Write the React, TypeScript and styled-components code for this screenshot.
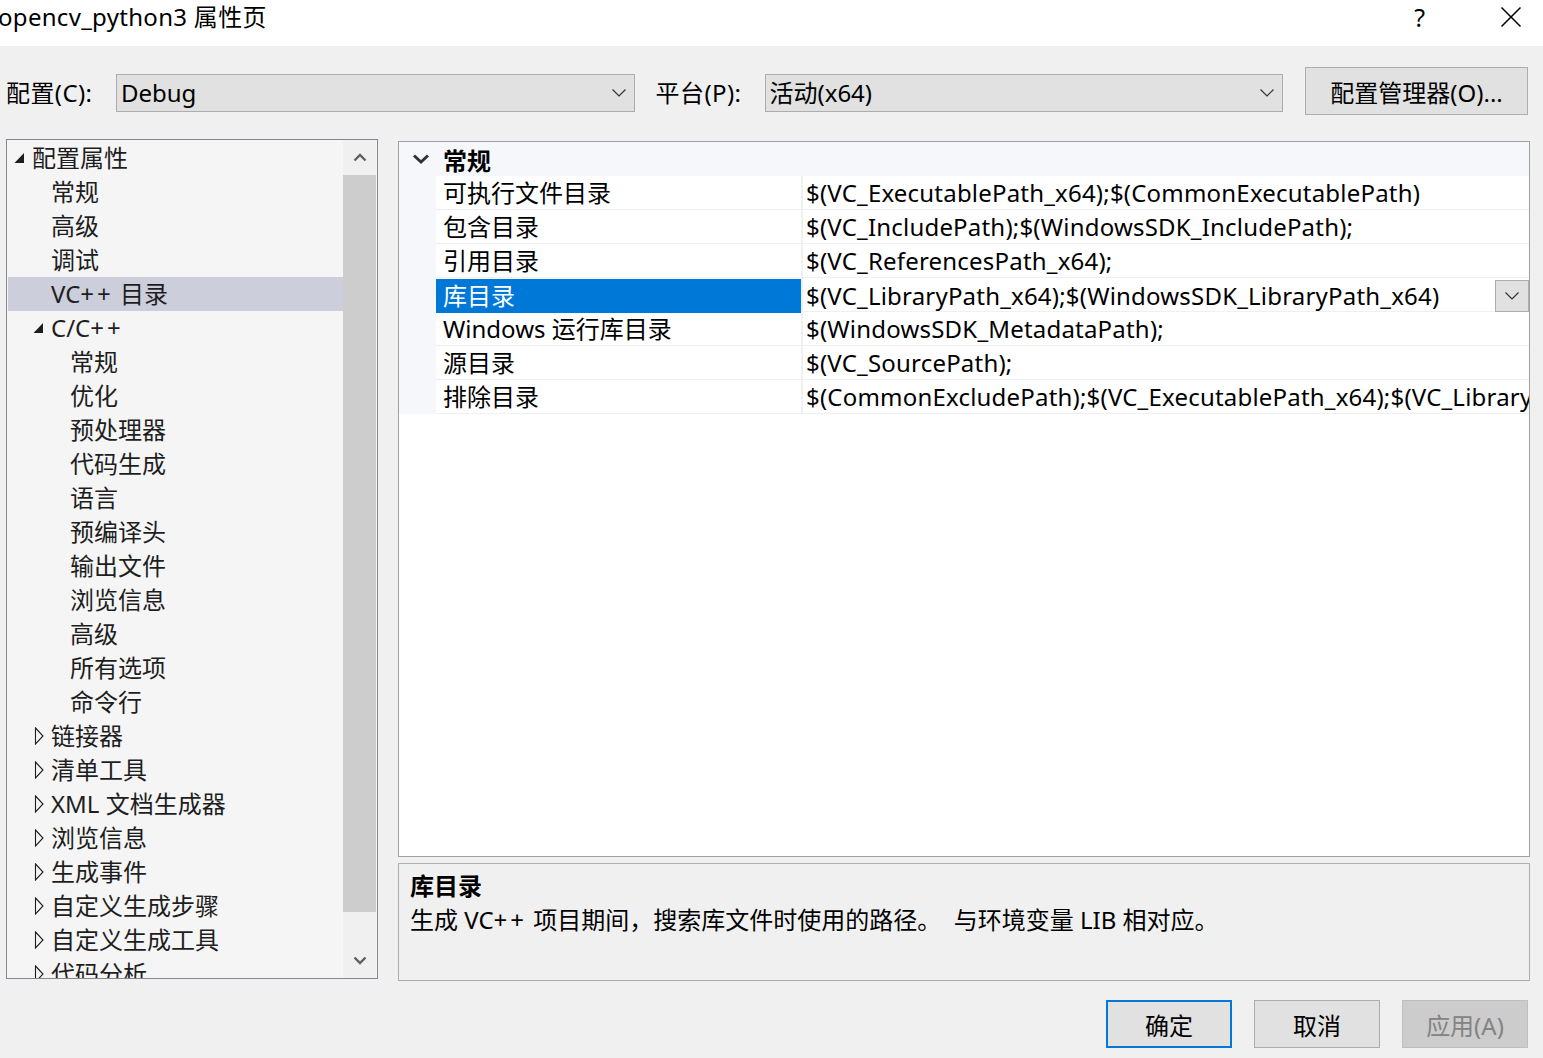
import React from "react";
import styled, { createGlobalStyle } from "styled-components";

const FONT = `"Noto Sans", "Noto Sans CJK SC", sans-serif`;

const Global = createGlobalStyle`
  html, body { margin: 0; padding: 0; }
  body { background: #f0f0f0; font-family: ${FONT}; color: #000; overflow: hidden; }
  * { box-sizing: border-box; }
`;

const Window = styled.div`
  width: 1543px;
  height: 1058px;
  background: #f0f0f0;
  display: flex;
  flex-direction: column;
  font-size: 24px;
`;

const TitleBar = styled.div`
  height: 46px;
  background: #ffffff;
  display: flex;
  align-items: flex-start;
  justify-content: space-between;
`;

const Title = styled.div`
  margin-left: -2px;
  line-height: 34px;
  font-size: 24px;
  letter-spacing: 0.3px;
  white-space: nowrap;
`;

const TitleButtons = styled.div`
  display: flex;
  align-items: center;
  height: 34px;
  margin-right: 21px;
  gap: 75px;
`;

const HelpGlyph = styled.span`
  font-size: 25px;
  line-height: 34px;
`;

const ConfigBar = styled.div`
  margin-top: 21px;
  height: 48px;
  display: flex;
  align-items: flex-start;
  padding: 0 15px 0 6px;
`;

const FieldLabel = styled.div<{ $w: number }>`
  width: ${(p) => p.$w}px;
  height: 38px;
  margin-top: 7px;
  line-height: 38px;
  letter-spacing: 0.4px;
  white-space: nowrap;
`;

const Combo = styled.div<{ $gap?: number }>`
  width: 519px;
  height: 38px;
  margin-top: 7px;
  margin-right: ${(p) => p.$gap ?? 0}px;
  background: #e1e1e1;
  border: 1px solid #adadad;
  display: flex;
  align-items: center;
  justify-content: space-between;
  padding: 0 7px 0 4px;
  line-height: 36px;
`;

const Button = styled.button<{ $w: number; $primary?: boolean; $disabled?: boolean }>`
  width: ${(p) => p.$w}px;
  height: 48px;
  font-family: ${FONT};
  font-size: 24px;
  color: ${(p) => (p.$disabled ? "#838383" : "#000")};
  background: ${(p) => (p.$disabled ? "#cccccc" : "#e1e1e1")};
  border: ${(p) => (p.$primary ? "2px solid #0078d7" : p.$disabled ? "1px solid #bfbfbf" : "1px solid #adadad")};
  padding: 0;
  margin: 0;
  white-space: nowrap;
`;

const Main = styled.div`
  margin-top: 24px;
  display: flex;
  padding-left: 6px;
  gap: 20px;
`;

const TreePanel = styled.div`
  width: 372px;
  height: 840px;
  border: 1px solid #828790;
  background: #f5f5f5;
  display: flex;
  overflow: hidden;
`;

const TreeList = styled.div`
  flex: 1;
  padding-top: 1px;
  overflow: hidden;
`;

const TreeRow = styled.div<{ $depth: number; $selected?: boolean }>`
  height: 34px;
  display: flex;
  align-items: center;
  padding-left: ${(p) => p.$depth * 19 + 6}px;
  background: ${(p) => (p.$selected ? "#cccedb" : "transparent")};
  margin-left: 1px;
  line-height: 32px;
  white-space: pre;
  color: #1e1e1e;
`;

const Plus = styled.span`
  letter-spacing: 3px;
`;

const Expander = styled.span`
  width: 18px;
  height: 34px;
  display: flex;
  align-items: center;
  flex-shrink: 0;
`;

const ScrollBar = styled.div`
  width: 33px;
  background: #f0f0f0;
  display: flex;
  flex-direction: column;
  margin-right: 1px;
`;

const ScrollArrow = styled.div`
  height: 35px;
  display: flex;
  align-items: center;
  justify-content: center;
`;

const ScrollThumb = styled.div`
  height: 737px;
  background: #cdcdcd;
`;

const ScrollTrack = styled.div`
  flex: 1;
`;

const RightColumn = styled.div`
  width: 1132px;
  padding-top: 2px;
  display: flex;
  flex-direction: column;
  gap: 6px;
`;

const PropGrid = styled.div`
  height: 716px;
  border: 1px solid #a0a0a0;
  background: #ffffff;
  overflow: hidden;
`;

const GroupHeader = styled.div`
  height: 34px;
  display: flex;
  align-items: center;
  background: #f5f7fa;
`;

const GroupToggle = styled.span`
  width: 37px;
  display: flex;
  justify-content: center;
  padding-left: 6px;
`;

const GroupTitle = styled.span`
  font-weight: 700;
  padding-left: 7px;
`;

const GroupBody = styled.div`
  display: flex;
`;

const Gutter = styled.div`
  width: 37px;
  background: #f5f7fa;
`;

const Rows = styled.div`
  flex: 1;
  min-width: 0;
`;

const PropRow = styled.div`
  height: 34px;
  display: grid;
  grid-template-columns: 365px 1fr;
  border-bottom: 1px solid #f0f0f0;
`;

const NameCell = styled.div<{ $selected?: boolean }>`
  background: ${(p) => (p.$selected ? "#0078d7" : "transparent")};
  color: ${(p) => (p.$selected ? "#ffffff" : "#000")};
  padding-left: 7px;
  line-height: 34px;
  white-space: nowrap;
  margin-top: ${(p) => (p.$selected ? "1px" : "0")};
`;

const ValueCell = styled.div`
  border-left: 2px solid #f0f0f0;
  padding-left: 3px;
  display: flex;
  align-items: center;
  min-width: 0;
  overflow: hidden;
`;

const ValueText = styled.span`
  flex: 1;
  white-space: nowrap;
  overflow: hidden;
  line-height: 34px;
  letter-spacing: 0.2px;
`;

const DropButton = styled.span`
  width: 34px;
  height: 32px;
  flex-shrink: 0;
  background: #e1e1e1;
  border: 1px solid #adadad;
  display: flex;
  align-items: center;
  justify-content: center;
`;

const DescPanel = styled.div`
  height: 118px;
  border: 1px solid #adadad;
  background: #f0f0f0;
  padding: 5px 11px 0;
`;

const DescTitle = styled.div`
  font-weight: 700;
  line-height: 34px;
`;

const DescText = styled.div`
  line-height: 34px;
  white-space: pre;
`;

const Footer = styled.div`
  margin-top: 19px;
  display: flex;
  justify-content: flex-end;
  gap: 22px;
  padding-right: 15px;
`;

const ThinChevron = () => (
  <svg width="16" height="10" viewBox="0 0 16 10">
    <polyline points="1.5,1.5 8,8 14.5,1.5" fill="none" stroke="#333" strokeWidth="1.2" />
  </svg>
);

const CloseIcon = () => (
  <svg width="22" height="22" viewBox="0 0 22 22">
    <line x1="1.5" y1="1.5" x2="20.5" y2="20.5" stroke="#000" strokeWidth="1.6" />
    <line x1="20.5" y1="1.5" x2="1.5" y2="20.5" stroke="#000" strokeWidth="1.6" />
  </svg>
);

const ExpandedTri = () => (
  <svg width="11" height="12" viewBox="0 0 11 12">
    <polygon points="0.5,11 10,11 10,1" fill="#1e1e1e" />
  </svg>
);

const CollapsedTri = () => (
  <svg width="12" height="18" viewBox="0 0 12 18">
    <polygon points="2.5,1 10,9 2.5,17" fill="none" stroke="#1e1e1e" strokeWidth="1.1" />
  </svg>
);

const ScrollChevron = ({ up }: { up?: boolean }) => (
  <svg width="14" height="9" viewBox="0 0 14 9">
    <polyline
      points={up ? "1.5,7.5 7,2 12.5,7.5" : "1.5,1.5 7,7 12.5,1.5"}
      fill="none"
      stroke="#606060"
      strokeWidth="2.4"
    />
  </svg>
);

const BoldChevron = () => (
  <svg width="18" height="12" viewBox="0 0 18 12">
    <polyline points="2,2.5 9,9 16,2.5" fill="none" stroke="#333" strokeWidth="3" />
  </svg>
);

type Node = { label: React.ReactNode; depth: number; exp?: "open" | "closed"; selected?: boolean };

const tree: Node[] = [
  { label: "配置属性", depth: 0, exp: "open" },
  { label: "常规", depth: 1 },
  { label: "高级", depth: 1 },
  { label: "调试", depth: 1 },
  { label: <>VC<Plus>++</Plus> 目录</>, depth: 1, selected: true },
  { label: <>C/C<Plus>++</Plus></>, depth: 1, exp: "open" },
  { label: "常规", depth: 2 },
  { label: "优化", depth: 2 },
  { label: "预处理器", depth: 2 },
  { label: "代码生成", depth: 2 },
  { label: "语言", depth: 2 },
  { label: "预编译头", depth: 2 },
  { label: "输出文件", depth: 2 },
  { label: "浏览信息", depth: 2 },
  { label: "高级", depth: 2 },
  { label: "所有选项", depth: 2 },
  { label: "命令行", depth: 2 },
  { label: "链接器", depth: 1, exp: "closed" },
  { label: "清单工具", depth: 1, exp: "closed" },
  { label: "XML 文档生成器", depth: 1, exp: "closed" },
  { label: "浏览信息", depth: 1, exp: "closed" },
  { label: "生成事件", depth: 1, exp: "closed" },
  { label: "自定义生成步骤", depth: 1, exp: "closed" },
  { label: "自定义生成工具", depth: 1, exp: "closed" },
  { label: "代码分析", depth: 1, exp: "closed" },
];

const props = [
  { name: "可执行文件目录", value: "$(VC_ExecutablePath_x64);$(CommonExecutablePath)" },
  { name: "包含目录", value: "$(VC_IncludePath);$(WindowsSDK_IncludePath);" },
  { name: "引用目录", value: "$(VC_ReferencesPath_x64);" },
  { name: "库目录", value: "$(VC_LibraryPath_x64);$(WindowsSDK_LibraryPath_x64)", selected: true },
  { name: "Windows 运行库目录", value: "$(WindowsSDK_MetadataPath);" },
  { name: "源目录", value: "$(VC_SourcePath);" },
  { name: "排除目录", value: "$(CommonExcludePath);$(VC_ExecutablePath_x64);$(VC_LibraryPath_x64)" },
];

export default function App() {
  return (
    <Window>
      <Global />
      <TitleBar>
        <Title>opencv_python3 属性页</Title>
        <TitleButtons>
          <HelpGlyph>?</HelpGlyph>
          <CloseIcon />
        </TitleButtons>
      </TitleBar>

      <ConfigBar>
        <FieldLabel $w={110}>配置(C):</FieldLabel>
        <Combo $gap={21}>
          <span>Debug</span>
          <ThinChevron />
        </Combo>
        <FieldLabel $w={109}>平台(P):</FieldLabel>
        <Combo $gap={22}>
          <span>活动(x64)</span>
          <ThinChevron />
        </Combo>
        <Button $w={223}>配置管理器(O)...</Button>
      </ConfigBar>

      <Main>
        <TreePanel>
          <TreeList>
            {tree.map((n, i) => (
              <TreeRow key={i} $depth={n.depth} $selected={n.selected}>
                <Expander>
                  {n.exp === "open" && <ExpandedTri />}
                  {n.exp === "closed" && <CollapsedTri />}
                </Expander>
                {n.label}
              </TreeRow>
            ))}
          </TreeList>
          <ScrollBar>
            <ScrollArrow>
              <ScrollChevron up />
            </ScrollArrow>
            <ScrollThumb />
            <ScrollTrack />
            <ScrollArrow>
              <ScrollChevron />
            </ScrollArrow>
          </ScrollBar>
        </TreePanel>

        <RightColumn>
          <PropGrid>
            <GroupHeader>
              <GroupToggle>
                <BoldChevron />
              </GroupToggle>
              <GroupTitle>常规</GroupTitle>
            </GroupHeader>
            <GroupBody>
              <Gutter />
              <Rows>
                {props.map((p, i) => (
                  <PropRow key={i}>
                    <NameCell $selected={p.selected}>{p.name}</NameCell>
                    <ValueCell>
                      <ValueText>{p.value}</ValueText>
                      {p.selected && (
                        <DropButton>
                          <ThinChevron />
                        </DropButton>
                      )}
                    </ValueCell>
                  </PropRow>
                ))}
              </Rows>
            </GroupBody>
          </PropGrid>
          <DescPanel>
            <DescTitle>库目录</DescTitle>
            <DescText>生成 VC<Plus>++</Plus> 项目期间，搜索库文件时使用的路径。  与环境变量 LIB 相对应。</DescText>
          </DescPanel>
        </RightColumn>
      </Main>

      <Footer>
        <Button $w={126} $primary>确定</Button>
        <Button $w={126}>取消</Button>
        <Button $w={126} $disabled>应用(A)</Button>
      </Footer>
    </Window>
  );
}
